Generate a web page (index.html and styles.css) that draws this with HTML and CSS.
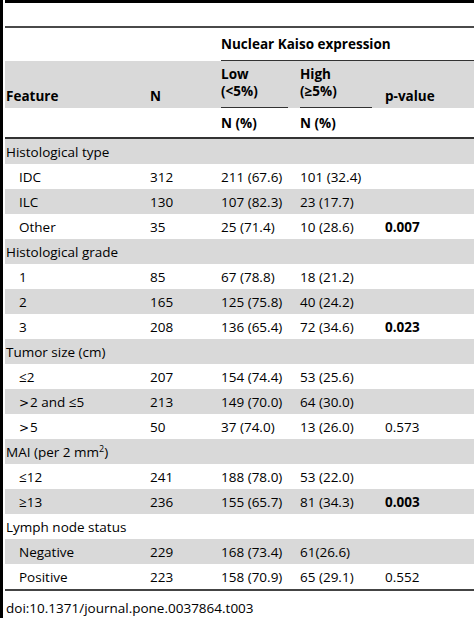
FILE: index.html
```html
<!DOCTYPE html>
<html>
<head>
<meta charset="utf-8">
<link rel="stylesheet" href="styles.css">
</head>
<body>
<div class="page">
  <div class="topbar"></div>
  <div class="spacer"></div>
  <div class="row head-b">
    <div class="span3 bold">Nuclear Kaiso expression</div>
  </div>
  <div class="row head-c gray">
    <div class="c1 bold end">Feature</div>
    <div class="c2 bold end">N</div>
    <div class="bold sub low">Low<br>(&lt;5%)</div>
    <div class="bold sub high">High<br>(≥5%)</div>
    <div class="bold end">p-value</div>
  </div>
  <div class="row head-d">
    <div></div><div></div>
    <div class="bold">N (%)</div>
    <div class="bold">N (%)</div>
    <div></div>
  </div>
  <div class="body">
    <div class="row gray"><div class="grp">Histological type</div></div>
    <div class="row"><div class="item">IDC</div><div>312</div><div>211 (67.6)</div><div>101 (32.4)</div><div></div></div>
    <div class="row gray"><div class="item">ILC</div><div>130</div><div>107 (82.3)</div><div>23 (17.7)</div><div></div></div>
    <div class="row"><div class="item">Other</div><div>35</div><div>25 (71.4)</div><div>10 (28.6)</div><div class="bold">0.007</div></div>
    <div class="row gray"><div class="grp">Histological grade</div></div>
    <div class="row"><div class="item">1</div><div>85</div><div>67 (78.8)</div><div>18 (21.2)</div><div></div></div>
    <div class="row gray"><div class="item">2</div><div>165</div><div>125 (75.8)</div><div>40 (24.2)</div><div></div></div>
    <div class="row"><div class="item">3</div><div>208</div><div>136 (65.4)</div><div>72 (34.6)</div><div class="bold">0.023</div></div>
    <div class="row gray"><div class="grp">Tumor size (cm)</div></div>
    <div class="row"><div class="item">≤2</div><div>207</div><div>154 (74.4)</div><div>53 (25.6)</div><div></div></div>
    <div class="row gray"><div class="item"><span class="gt">&gt;</span>2 and ≤5</div><div>213</div><div>149 (70.0)</div><div>64 (30.0)</div><div></div></div>
    <div class="row"><div class="item"><span class="gt">&gt;</span>5</div><div>50</div><div>37 (74.0)</div><div>13 (26.0)</div><div>0.573</div></div>
    <div class="row gray"><div class="grp">MAI (per 2 mm<sup>2</sup>)</div></div>
    <div class="row"><div class="item">≤12</div><div>241</div><div>188 (78.0)</div><div>53 (22.0)</div><div></div></div>
    <div class="row gray"><div class="item">≥13</div><div>236</div><div>155 (65.7)</div><div>81 (34.3)</div><div class="bold">0.003</div></div>
    <div class="row"><div class="grp">Lymph node status</div></div>
    <div class="row gray"><div class="item">Negative</div><div>229</div><div>168 (73.4)</div><div>61(26.6)</div><div></div></div>
    <div class="row"><div class="item">Positive</div><div>223</div><div>158 (70.9)</div><div>65 (29.1)</div><div>0.552</div></div>
  </div>
  <div class="doi">doi:10.1371/journal.pone.0037864.t003</div>
</div>
</body>
</html>
```

FILE: styles.css
```css
html, body {
  margin: 0;
  padding: 0;
  background: #fff;
}
body {
  font-family: "Open Sans", "DejaVu Sans", sans-serif;
  font-size: 13.5px;
  color: #000;
}
.page {
  width: 474px;
  height: 618px;
  box-sizing: border-box;
  border-left: 3px solid #000;
  padding-left: 2px;
  overflow: hidden;
}
.topbar {
  height: 3px;
  background: #000;
}
.spacer {
  height: 23px;
  border-bottom: 2px solid #4a4a4a;
}
.row {
  display: grid;
  grid-template-columns: 145px 71px 79px 85px 1fr;
  align-items: center;
}
.gray {
  background: #d9d9d9;
}
.bold {
  font-weight: 700;
}
.head-b {
  height: 33px;
}
.head-b .span3 {
  grid-column: 3 / 6;
  align-self: stretch;
  display: flex;
  align-items: center;
  border-bottom: 1px solid #333;
}
.head-c {
  height: 47px;
  align-items: stretch;
}
.head-c .c1 {
  padding-left: 1px;
}
.head-c .end {
  align-self: end;
  padding-bottom: 3px;
  line-height: 17px;
}
.head-c .sub {
  padding-top: 5px;
  line-height: 17px;
  border-bottom: 1px solid #333;
}
.head-c .low {
  margin-right: 12px;
}
.head-c .high {
  margin-right: 13px;
}
.head-d {
  height: 29px;
  border-bottom: 2px solid #333;
}
.body .row {
  height: 25px;
  line-height: 17px;
}
.body .row > div {
  padding-top: 2px;
}
.grp {
  padding-left: 1px;
  grid-column: 1 / 6;
}
.item {
  padding-left: 14px;
}
.gt {
  font-family: "DejaVu Sans", sans-serif;
  font-size: 12px;
  margin-right: 1px;
}
sup {
  font-size: 9px;
  line-height: 0;
  vertical-align: 5px;
}
.body {
  border-bottom: 2px solid #444;
}
.doi {
  margin-top: 9px;
  line-height: 17px;
  padding-left: 1px;
}
```
